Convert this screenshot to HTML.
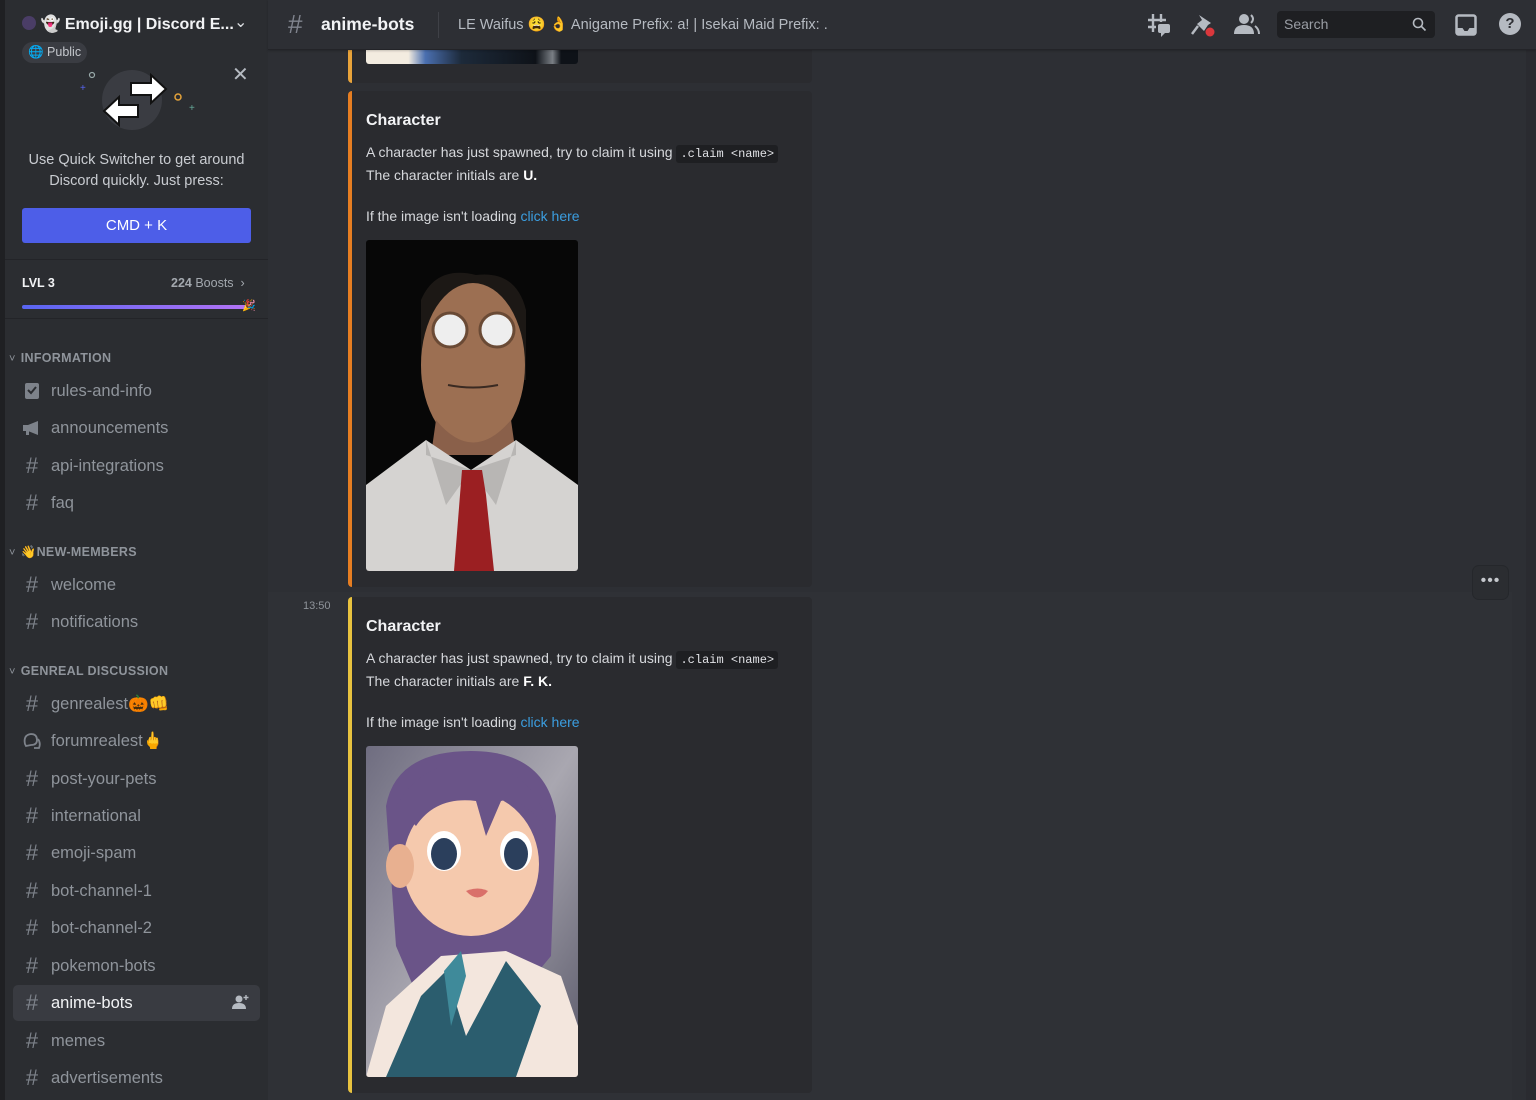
<!DOCTYPE html>
<html><head><meta charset="utf-8">
<style>
*{box-sizing:border-box;margin:0;padding:0}
body{width:1536px;height:1100px;overflow:hidden;background:#2d2f34;font-family:"Liberation Sans","Noto Sans CJK JP",sans-serif;position:relative;color:#dbdee1}
.side{position:absolute;left:0;top:0;width:268px;height:1100px;background:#2b2d31}
.strip{position:absolute;left:0;top:0;width:5px;height:1100px;background:#1f2023}
.abs{position:absolute}
.ch{position:absolute;left:22px;font-size:16.5px;color:#8f949b;display:flex;align-items:center;height:24px;white-space:nowrap}
.ch .h{width:20px;flex-shrink:0;margin-right:9px;font-size:22px;color:#7d828a;text-align:center;font-weight:300;display:flex;justify-content:center;align-items:center}
.cat{position:absolute;left:9px;font-size:12.5px;font-weight:bold;color:#8f949b;letter-spacing:.3px}
.cat:before{content:"˅";margin-right:5px;font-weight:normal;font-size:11px}
.hdr{position:absolute;left:268px;top:0;right:0;height:50px;background:#2d2f34;border-bottom:1px solid #232428;box-shadow:0 1px 2px rgba(0,0,0,.2)}
.emb{position:absolute;left:348px;width:464px;background:#2a2b2f;border-radius:4px;border-left:4px solid #e67e22}
.emb .t{position:absolute;left:14px;font-weight:bold;font-size:16px;color:#f2f3f5}
.emb .d{position:absolute;left:14px;font-size:14px;color:#d6d8dc;line-height:20.5px}
code{font-family:"Liberation Mono",monospace;font-size:12px;background:#1e1f22;padding:2px 4px;border-radius:3px;color:#e0e1e5}
a{color:#3b9ee0;text-decoration:none}
</style></head><body>
<div class="side">
  <div class="strip"></div>
  <div class="abs" style="left:22px;top:14px;font-size:16px;font-weight:bold;color:#f2f3f5;white-space:nowrap">
    <span style="display:inline-block;width:14px;height:14px;border-radius:50%;background:#4a3d66;vertical-align:-1px"></span> 👻 Emoji.gg | Discord E...</div>
  <div class="abs" style="left:234px;top:12px;font-size:16px;color:#dbdee1">⌄</div>
  <div class="abs" style="left:22px;top:42px;height:21px;padding:0 6px;border-radius:11px;background:#3a3c42;font-size:12.5px;color:#c4c7cc;line-height:21px">🌐 Public</div>
  <div class="abs" style="left:232px;top:62px;font-size:20px;color:#b5bac1">✕</div>
  <svg class="abs" style="left:74px;top:65px" width="130" height="70" viewBox="0 0 130 70">
    <circle cx="58" cy="35" r="30" fill="#3a3c42"/>
    <path d="M57 18h20v-8l15 14-15 14v-8H57z" fill="#fff" stroke="#111" stroke-width="2"/>
    <path d="M64 40H45v-8L30 46l15 14v-8h19z" fill="#fff" stroke="#111" stroke-width="2"/>
    <circle cx="18" cy="10" r="2.5" fill="none" stroke="#9aa" stroke-width="1.2"/>
    <circle cx="104" cy="32" r="3" fill="none" stroke="#e5a33a" stroke-width="1.5"/>
    <text x="6" y="26" fill="#5865f2" font-size="10">+</text>
    <text x="115" y="46" fill="#6a9" font-size="10">+</text>
  </svg>
  <div class="abs" style="left:5px;width:263px;top:150px;text-align:center;font-size:14.5px;line-height:20.5px;color:#c9ccd1">Use Quick Switcher to get around<br>Discord quickly. Just press:</div>
  <div class="abs" style="left:22px;top:208px;width:229px;height:35px;background:#4d5ee8;border-radius:3px;color:#fff;font-size:15px;text-align:center;line-height:35px">CMD + K</div>
  <div class="abs" style="left:5px;top:259px;width:263px;border-top:1px solid #232428"></div>
  <div class="abs" style="left:22px;top:276px;font-size:12.5px;font-weight:bold;color:#f2f3f5">LVL 3</div>
  <div class="abs" style="left:171px;top:276px;font-size:12.5px;color:#a3a8ae"><b>224</b> Boosts &nbsp;›</div>
  <div class="abs" style="left:22px;top:305px;width:228px;height:4px;border-radius:2px;background:linear-gradient(90deg,#5865f2,#b473f5)"></div>
  <div class="abs" style="left:242px;top:299px;font-size:11px">🎉</div>
  <div class="abs" style="left:5px;top:318px;width:263px;border-top:1px solid #232428"></div>

  <div class="cat" style="top:351px">INFORMATION</div>
  <div class="ch" style="top:379px"><span class="h"><svg width="18" height="18" viewBox="0 0 18 18"><rect x="2" y="1" width="14" height="16" rx="2" fill="#7d828a"/><path d="M5 8l3 3 5-6" stroke="#2b2d31" stroke-width="2" fill="none"/></svg></span>rules-and-info</div>
  <div class="ch" style="top:416px"><span class="h"><svg width="20" height="16" viewBox="0 0 20 16"><path d="M1 5h5l10-4v14L6 11H1z" fill="#7d828a"/><rect x="4" y="11" width="3" height="4" fill="#7d828a"/></svg></span>announcements</div>
  <div class="ch" style="top:454px"><span class="h">#</span>api-integrations</div>
  <div class="ch" style="top:491px"><span class="h">#</span>faq</div>
  <div class="cat" style="top:545px">👋NEW-MEMBERS</div>
  <div class="ch" style="top:573px"><span class="h">#</span>welcome</div>
  <div class="ch" style="top:610px"><span class="h">#</span>notifications</div>
  <div class="cat" style="top:664px">GENREAL DISCUSSION</div>
  <div class="ch" style="top:692px"><span class="h">#</span>genrealest🎃👊</div>
  <div class="ch" style="top:729px"><span class="h"><svg width="20" height="20" viewBox="0 0 20 20"><path d="M3 13 Q1 4 9 3 Q15 3 15 9 Q15 14 9 14 L4 15z" fill="none" stroke="#7d828a" stroke-width="1.8"/><path d="M16 8 Q19 12 17 17 L12 17" fill="none" stroke="#7d828a" stroke-width="1.8"/></svg></span>forumrealest🖕</div>
  <div class="ch" style="top:767px"><span class="h">#</span>post-your-pets</div>
  <div class="ch" style="top:804px"><span class="h">#</span>international</div>
  <div class="ch" style="top:841px"><span class="h">#</span>emoji-spam</div>
  <div class="ch" style="top:879px"><span class="h">#</span>bot-channel-1</div>
  <div class="ch" style="top:916px"><span class="h">#</span>bot-channel-2</div>
  <div class="ch" style="top:954px"><span class="h">#</span>pokemon-bots</div>
  <div class="abs" style="left:13px;top:985px;width:247px;height:36px;background:#393b41;border-radius:5px"></div>
  <div class="ch" style="top:991px;color:#f2f3f5"><span class="h">#</span>anime-bots</div>
  <svg class="abs" style="left:232px;top:994px" width="18" height="16" viewBox="0 0 18 16"><circle cx="7" cy="5" r="3.5" fill="#b5bac1"/><path d="M0 15 Q0 9 7 9 Q14 9 14 15z" fill="#b5bac1"/><path d="M14 1v5M11.5 3.5h5" stroke="#b5bac1" stroke-width="1.4"/></svg>
  <div class="ch" style="top:1029px"><span class="h">#</span>memes</div>
  <div class="ch" style="top:1066px"><span class="h">#</span>advertisements</div>
</div>

<div class="abs" style="left:268px;top:592px;width:1244px;height:508px;background:#2f3136"></div>
<div class="abs" style="left:1526px;top:50px;width:10px;height:1050px;background:#2a2b30"></div>

<div class="emb" style="top:40px;height:43px;border-left-color:#e8a33a">
  <div class="abs" style="left:14px;top:10px;width:212px;height:14px;border-radius:0 0 3px 3px;background:linear-gradient(90deg,#f3ece0 0,#f3ece0 20%,#4a6fb0 28%,#1d2a3a 45%,#0e1218 80%,#7a7f85 88%,#0e1218 92%)"></div>
</div>

<div class="emb" style="top:91px;height:496px">
  <div class="t" style="top:21px">Character</div>
  <div class="d" style="top:51px">A character has just spawned, try to claim it using <code>.claim &lt;name&gt;</code><br>The character initials are <b style="color:#fff">U.</b><br><br>If the image isn't loading <a>click here</a></div>
  <svg class="abs" style="left:14px;top:149px;border-radius:3px" width="212" height="331" viewBox="0 0 212 331">
    <rect width="212" height="331" fill="#070707"/>
    <path d="M55 60 Q70 25 110 35 Q150 30 160 70 L160 140 L55 140z" fill="#1c1815"/>
    <ellipse cx="107" cy="125" rx="52" ry="82" fill="#9c6f52"/>
    <path d="M70 180 Q107 225 145 180 L150 215 L65 215z" fill="#8a604a"/>
    <circle cx="84" cy="90" r="17" fill="#eee" stroke="#6a4a35" stroke-width="3"/>
    <circle cx="131" cy="90" r="17" fill="#eee" stroke="#6a4a35" stroke-width="3"/>
    <path d="M82 145 Q107 150 132 145" stroke="#3a2a22" stroke-width="2" fill="none"/>
    <path d="M0 245 L60 200 L105 230 L150 200 L212 245 L212 331 L0 331z" fill="#d5d3d1"/>
    <path d="M60 200 L80 265 L105 230 L130 265 L150 200 L150 215 L105 230 L60 215z" fill="#b8b6b4"/>
    <path d="M96 230 L116 230 L120 255 L128 331 L88 331 L94 255z" fill="#9b1f22"/>
  </svg>
</div>

<div class="abs" style="left:303px;top:600px;font-size:11px;color:#8f949b">13:50</div>
<div class="abs" style="left:1472px;top:565px;width:37px;height:35px;border-radius:7px;background:#2b2d31;border:1px solid #25272b;color:#c4c7cc;text-align:center;line-height:30px;font-size:16px;letter-spacing:1px">•••</div>

<div class="emb" style="top:597px;height:496px;border-left-color:#e8c23f">
  <div class="t" style="top:21px">Character</div>
  <div class="d" style="top:51px">A character has just spawned, try to claim it using <code>.claim &lt;name&gt;</code><br>The character initials are <b style="color:#fff">F. K.</b><br><br>If the image isn't loading <a>click here</a></div>
  <svg class="abs" style="left:14px;top:149px;border-radius:3px" width="212" height="331" viewBox="0 0 212 331">
    <defs><linearGradient id="cr" x1="0" y1="0" x2="1" y2="1"><stop offset="0" stop-color="#6f6d80"/><stop offset=".5" stop-color="#a9a7b0"/><stop offset="1" stop-color="#5a596a"/></linearGradient></defs>
    <rect width="212" height="331" fill="url(#cr)"/>
    <path d="M20 60 Q30 5 105 5 Q180 5 190 70 L185 210 L160 240 L60 270 L30 200z" fill="#6a5488"/>
    <ellipse cx="105" cy="118" rx="68" ry="72" fill="#f5c9ad"/>
    <ellipse cx="34" cy="120" rx="14" ry="22" fill="#e8b090"/>
    <path d="M30 60 Q60 10 110 20 Q170 20 185 90 L170 70 Q150 50 135 55 L120 90 L110 55 Q70 50 50 80z" fill="#6a5488"/>
    <ellipse cx="78" cy="105" rx="17" ry="20" fill="#fff"/><ellipse cx="78" cy="108" rx="13" ry="16" fill="#2b3f5c"/>
    <ellipse cx="150" cy="105" rx="16" ry="20" fill="#fff"/><ellipse cx="150" cy="108" rx="12" ry="16" fill="#2b3f5c"/>
    <path d="M100 145 Q112 140 122 145 Q112 158 100 145z" fill="#d9706a"/>
    <path d="M0 331 L20 260 L75 210 L140 205 L195 230 L212 280 L212 331z" fill="#f3e6dd"/>
    <path d="M20 331 L55 250 L80 225 L100 290 L140 215 L175 260 L150 331z" fill="#2b5d6e"/>
    <path d="M78 225 L95 205 L100 230 L85 280z" fill="#3f8a9a"/>
  </svg>
</div>

<div class="hdr">
  <div class="abs" style="left:20px;top:9px;font-size:26px;color:#80848e;font-weight:300">#</div>
  <div class="abs" style="left:53px;top:14px;font-size:17.5px;font-weight:bold;color:#f2f3f5">anime-bots</div>
  <div class="abs" style="left:170px;top:12px;height:26px;border-left:1px solid #3f4147"></div>
  <div class="abs" style="left:190px;top:16px;font-size:14.5px;color:#b5bac1;white-space:nowrap">LE Waifus 😩 👌 Anigame Prefix: a! | Isekai Maid Prefix: .</div>
  <svg class="abs" style="left:878px;top:12px" width="26" height="26" viewBox="0 0 26 26"><path d="M7 2v18M15 2v8M2 8h18M2 15h8" stroke="#b5bac1" stroke-width="2.4"/><rect x="12" y="12" width="12" height="9" rx="2" fill="#b5bac1"/><path d="M15 21v4l4-4z" fill="#b5bac1"/></svg>
  <svg class="abs" style="left:922px;top:12px" width="26" height="26" viewBox="0 0 26 26"><path d="M9 3l12 8-3 2-4 6-7-7 5-4z" fill="#b5bac1"/><path d="M8 14L2 22" stroke="#b5bac1" stroke-width="2.5"/><circle cx="20" cy="20" r="4.5" fill="#da373c"/></svg>
  <svg class="abs" style="left:966px;top:12px" width="26" height="24" viewBox="0 0 26 24"><circle cx="10" cy="7" r="5" fill="#b5bac1"/><path d="M0 22 Q0 13 10 13 Q20 13 20 22z" fill="#b5bac1"/><path d="M17 3 Q21 7 17 11M21 14 Q25 17 25 22" stroke="#b5bac1" stroke-width="2" fill="none"/></svg>
  <div class="abs" style="left:1009px;top:11px;width:158px;height:27px;background:#1e1f22;border-radius:4px;font-size:14px;color:#9a9ea5;line-height:27px;padding-left:7px">Search
    <svg class="abs" style="right:8px;top:6px" width="15" height="15" viewBox="0 0 15 15"><circle cx="6" cy="6" r="4.5" fill="none" stroke="#b5bac1" stroke-width="1.6"/><path d="M9.5 9.5l4 4" stroke="#b5bac1" stroke-width="1.6"/></svg></div>
  <svg class="abs" style="left:1187px;top:14px" width="22" height="22" viewBox="0 0 22 22"><rect x="1.5" y="1.5" width="19" height="19" rx="2" fill="none" stroke="#b5bac1" stroke-width="2.5"/><path d="M1.5 14h6l2 3h3l2-3h6v6.5h-19z" fill="#b5bac1"/></svg>
  <div class="abs" style="left:1231px;top:13px;width:22px;height:22px;border-radius:50%;background:#b5bac1;color:#2d2f34;font-weight:bold;text-align:center;line-height:22px;font-size:15px">?</div>
</div>
</body></html>
